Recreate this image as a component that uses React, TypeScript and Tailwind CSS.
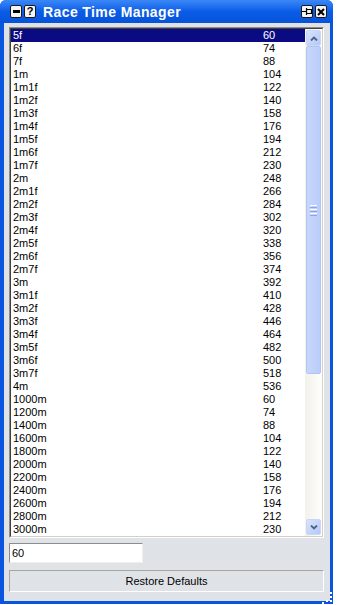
import React from "react";

const rows: [string, number][] = [
    ["5f", 60], ["6f", 74], ["7f", 88],
    ["1m", 104], ["1m1f", 122], ["1m2f", 140], ["1m3f", 158], ["1m4f", 176], ["1m5f", 194], ["1m6f", 212], ["1m7f", 230],
    ["2m", 248], ["2m1f", 266], ["2m2f", 284], ["2m3f", 302], ["2m4f", 320], ["2m5f", 338], ["2m6f", 356], ["2m7f", 374],
    ["3m", 392], ["3m1f", 410], ["3m2f", 428], ["3m3f", 446], ["3m4f", 464], ["3m5f", 482], ["3m6f", 500], ["3m7f", 518],
    ["4m", 536],
    ["1000m", 60], ["1200m", 74], ["1400m", 88], ["1600m", 104], ["1800m", 122], ["2000m", 140],
    ["2200m", 158], ["2400m", 176], ["2600m", 194], ["2800m", 212], ["3000m", 230],
];

function TitleButton({ children }: { children: React.ReactNode }) {
    return (
        <div className="w-[12px] h-[13px] bg-[#f4f4f4] border border-[#1a1a1a] rounded-[2px] flex items-center justify-center">
            {children}
        </div>
    );
}

function ScrollButton({ up }: { up?: boolean }) {
    return (
        <div className="h-[16px] mx-[1px] rounded-[2px] border border-[#c9d7f7] bg-gradient-to-br from-[#d8e3fd] to-[#b4c8f7] flex items-center justify-center">
            <svg width="8" height="5" viewBox="0 0 8 5">
                <path d={up ? "M1 4.5 L4 1.5 L7 4.5" : "M1 0.5 L4 3.5 L7 0.5"} stroke="#4d6185" strokeWidth="1.8" fill="none" />
            </svg>
        </div>
    );
}

export default function App() {
    return (
        <div className="w-[339px] h-[605px] bg-white" style={{ fontFamily: '"Liberation Sans", Arial, sans-serif' }}>
            <div className="relative w-[333px] h-[604px] flex flex-col rounded-t-[6px] bg-[#0a55df]">
                <div className="h-[23px] flex items-center pl-[10px] pr-[6px] rounded-t-[6px] bg-gradient-to-b from-[#3a88f6] via-[#0a5ce8] to-[#0753d8]">
                    <div className="flex gap-[2px]">
                        <TitleButton>
                            <div className="w-[7px] h-[3px] bg-black" />
                        </TitleButton>
                        <TitleButton>
                            <span className="text-[11px] font-bold leading-none text-black">?</span>
                        </TitleButton>
                    </div>
                    <span className="ml-[7px] text-white font-bold text-[14px] tracking-[0.4px] leading-none">Race Time Manager</span>
                    <div className="ml-auto flex gap-[2px]">
                        <TitleButton>
                            <svg width="10" height="9" viewBox="0 0 10 9">
                                <path d="M0 4.5 H4 M4.5 1 V8 M4.5 2.5 H9.5 V6.5 H4.5" stroke="#000" strokeWidth="1.2" fill="none" />
                            </svg>
                        </TitleButton>
                        <TitleButton>
                            <svg width="8" height="8" viewBox="0 0 8 8">
                                <path d="M1 1 L7 7 M7 1 L1 7" stroke="#000" strokeWidth="2" />
                            </svg>
                        </TitleButton>
                    </div>
                </div>
                <div className="flex-1 ml-[4px] mr-[3px] mb-[3px] bg-[#dfe3e8] pt-[4px] pl-[5px] pr-[6px] flex flex-col">
                    <div className="h-[511px] flex border border-t-[#8c8c8c] border-l-[#8c8c8c] border-b-white border-r-white">
                        <div className="flex-1 flex border border-t-[#404040] border-l-[#404040] border-b-[#d4d0c8] border-r-[#d4d0c8] bg-white">
                            <div className="flex-1 flex flex-col text-[11px] text-black">
                                {rows.map(([label, value], i) => (
                                    <div
                                        key={label}
                                        className={
                                            i === 0
                                                ? "h-[13px] flex items-center pl-[2px] bg-[#0a0a82] text-white"
                                                : "h-[13px] flex items-center pl-[2px]"
                                        }
                                    >
                                        <span className="w-[250px]">{label}</span>
                                        <span>{value}</span>
                                    </div>
                                ))}
                            </div>
                            <div className="w-[17px] flex flex-col py-[1px] bg-gradient-to-r from-[#f3f1ec] to-[#fefefb]">
                                <ScrollButton up />
                                <div className="h-[328px] mx-[1px] rounded-[2px] border border-[#b1c5f5] bg-gradient-to-r from-[#c8d6fb] to-[#bacdfa] flex flex-col items-center justify-center gap-[1px]">
                                    <div className="w-[7px] h-[1px] bg-white" />
                                    <div className="w-[7px] h-[1px] bg-[#8ca6e8]" />
                                    <div className="w-[7px] h-[1px] bg-white" />
                                    <div className="w-[7px] h-[1px] bg-[#8ca6e8]" />
                                    <div className="w-[7px] h-[1px] bg-white" />
                                    <div className="w-[7px] h-[1px] bg-[#8ca6e8]" />
                                </div>
                                <div className="flex-1" />
                                <ScrollButton />
                            </div>
                        </div>
                    </div>
                    <div className="mt-[5px] w-[134px] h-[20px] border border-t-[#8c8c8c] border-l-[#8c8c8c] border-b-[#f2f0e6] border-r-[#f2f0e6] bg-white flex items-center pl-[2px] text-[11px]">
                        60
                    </div>
                    <div className="mt-[7px] h-[22px] border border-t-[#a8a69c] border-l-[#a8a69c] border-b-white border-r-white bg-[#dfe3e8] flex items-center justify-center text-[11px] text-black">
                        Restore Defaults
                    </div>
                </div>
                <svg className="absolute right-0 bottom-0" width="16" height="14" viewBox="0 0 16 14">
                    <g fill="#ffffff">
                        <rect x="13" y="2" width="2" height="2" />
                        <rect x="13" y="6" width="2" height="2" />
                        <rect x="9" y="10" width="2" height="2" />
                        <rect x="13" y="10" width="2" height="2" />
                        <rect x="5" y="12" width="2" height="2" />
                    </g>
                </svg>
            </div>
        </div>
    );
}
